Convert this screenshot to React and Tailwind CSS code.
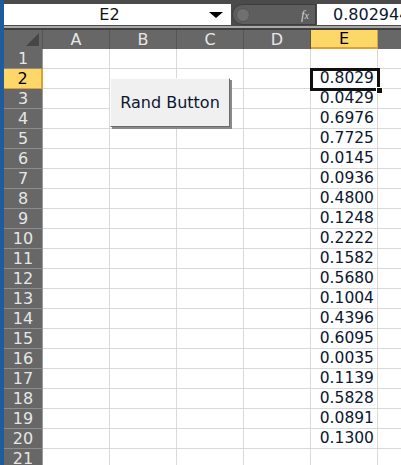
import React from 'react';

const values = [
  null, '0.8029', '0.0429', '0.6976', '0.7725', '0.0145', '0.0936', '0.4800', '0.1248', '0.2222',
  '0.1582', '0.5680', '0.1004', '0.4396', '0.6095', '0.0035', '0.1139', '0.5828', '0.0891', '0.1300', null,
];

const cols = ['A', 'B', 'C', 'D', 'E', 'F'];

function Toolbar() {
  return (
    <div className="h-[30px] flex flex-col shrink-0">
      <div className="h-[26px] flex items-start pt-[4px] bg-[#4b4b4b]">
        {/* name box */}
        <div className="w-[227px] h-[21px] bg-white flex items-center shrink-0">
          <div className="flex-1 text-center text-[16px] text-[#111] leading-none pl-[6px]">E2</div>
          <div className="w-0 h-0 border-l-[7px] border-r-[7px] border-t-[6px] border-l-transparent border-r-transparent border-t-black mr-[8px]" />
        </div>
        {/* pill */}
        <div className="ml-[1px] w-[84px] h-[21px] rounded-l-full bg-[#5e5e5e] border border-[#3d3d3d] flex items-center shrink-0">
          <div className="ml-[3px] w-[14px] h-[14px] rounded-full bg-[#707070] border border-[#555]" />
          <div className="ml-auto mr-[6px] text-[13px] italic text-[#d0d0d0] leading-none" style={{ fontFamily: '"Liberation Serif", serif' }}>
            f<span className="text-[10px]">x</span>
          </div>
        </div>
        {/* formula bar */}
        <div className="ml-[1px] flex-1 h-[21px] bg-white flex items-center pl-[16px] overflow-hidden">
          <span className="text-[16px] text-[#0b1630] leading-none whitespace-nowrap">0.802944</span>
        </div>
      </div>
      <div className="h-[2px] bg-[#a9a9a9]" />
      <div className="h-[2px] bg-[#3f3f3f]" />
    </div>
  );
}

function Grid() {
  return (
    <div className="relative flex-1 overflow-hidden bg-white">
      <div className="grid grid-cols-[39px_67px_67px_67px_67px_67px_67px] w-[441px]">
        {/* header row */}
        <div className="h-[19px] bg-[#676767] border-r border-[#555] relative">
          <div className="absolute right-[3px] bottom-[3px] w-0 h-0 border-b-[13px] border-l-[13px] border-l-transparent border-b-[#464646]" />
        </div>
        {cols.map((c) =>
          c === 'E' ? (
            <div key={c} className="h-[19px] bg-[#fdd868] border-r border-b-2 border-r-[#d9a441] border-b-[#e0a030] flex items-center justify-center text-[16px] text-black leading-none">
              {c}
            </div>
          ) : (
            <div key={c} className="h-[19px] bg-[#676767] border-r border-[#555] flex items-center justify-center text-[16px] text-[#e6e6e6] leading-none">
              {c}
            </div>
          )
        )}

        {values.map((v, i) => {
          const row = i + 1;
          const sel = row === 2;
          return (
            <React.Fragment key={row}>
              <div
                className={
                  sel
                    ? 'h-[20px] bg-[#fdd868] border-b border-r-2 border-b-[#e0a030] border-r-[#e0a030] flex items-center justify-center text-[16px] text-black leading-none'
                    : 'h-[20px] bg-[#676767] border-b border-r border-b-[#8c8c8c] border-r-[#9a9a9a] flex items-center justify-center text-[16px] text-[#e6e6e6] leading-none'
                }
              >
                {row}
              </div>
              {cols.map((c) => (
                <div
                  key={c}
                  className="h-[20px] border-r border-b border-[#d9d9d9] flex items-center justify-end pr-[3px] text-[15.5px] text-[#0b1630] leading-none"
                >
                  {c === 'E' && v ? v : ''}
                </div>
              ))}
            </React.Fragment>
          );
        })}
      </div>

      {/* active cell E2 */}
      <div className="absolute left-[306px] top-[38px] w-[70px] h-[23px] border-[3px] border-[#111]" />
      <div className="absolute left-[372px] top-[57px] w-[7px] h-[7px] bg-[#111] border border-white" />

      {/* form button */}
      <button className="absolute left-[106px] top-[48px] w-[120px] h-[49px] bg-[#f0f0f0] border border-t-[#fdfdfd] border-l-[#fdfdfd] border-r-[#6b6b6b] border-b-[#6b6b6b] shadow-[2px_2px_0_#8a8a8a] text-[16px] text-[#0b1630]">
        Rand Button
      </button>
    </div>
  );
}

export default function App() {
  return (
    <div className="w-[401px] h-[465px] overflow-hidden flex bg-[#4b4b4b]" style={{ fontFamily: '"DejaVu Sans", Verdana, sans-serif' }}>
      <div className="w-[4px] shrink-0 bg-[#1f5c9e]" />
      <div className="flex-1 flex flex-col min-w-0">
        <Toolbar />
        <Grid />
      </div>
    </div>
  );
}
